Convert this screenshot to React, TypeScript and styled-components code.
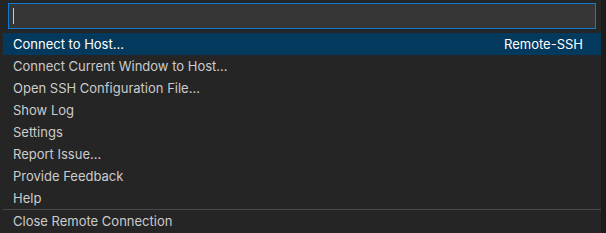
import React from "react";
import styled, { createGlobalStyle } from "styled-components";

const GlobalStyle = createGlobalStyle`
  html, body {
    margin: 0;
    padding: 0;
    background: #252526;
  }
`;

const Palette = styled("div")`
  width: 606px;
  height: 233px;
  box-sizing: border-box;
  background-color: #252526;
  font-family: Inter, "Liberation Sans", Arial, sans-serif;
  font-size: 13px;
  color: #cccccc;
  display: flex;
  flex-direction: column;
  padding: 3px 0 0 3px;
  overflow: hidden;
  border-right: 5px solid #1c1c1d;
`;

const InputWrap = styled("div")`
  padding: 0 5px;
  margin-bottom: 4px;
`;

const Input = styled("div")`
  height: 26px;
  box-sizing: border-box;
  border: 1px solid #0f7ad4;
  background-color: #363636;
  display: flex;
  align-items: center;
  padding-left: 4px;
`;

const Caret = styled("div")`
  width: 1px;
  height: 16px;
  background-color: #cccccc;
`;

const List = styled("div")`
  display: flex;
  flex-direction: column;
`;

const Row = styled("div")<{ active?: boolean; separated?: boolean }>`
  height: 22px;
  box-sizing: border-box;
  display: flex;
  align-items: center;
  justify-content: space-between;
  padding: 0 18px 0 10px;
  background-color: ${p => (p.active ? "#04395e" : "transparent")};
  color: ${p => (p.active ? "#ffffff" : "#cccccc")};
  border-top: ${p => (p.separated ? "1px solid #47474f" : "none")};
`;

const Label = styled("span")`
  white-space: nowrap;
`;

const Detail = styled("span")`
  white-space: nowrap;
`;

const items = [
  "Connect Current Window to Host...",
  "Open SSH Configuration File...",
  "Show Log",
  "Settings",
  "Report Issue...",
  "Provide Feedback",
  "Help",
];

const App: React.FC = () => {
  return (
    <React.Fragment>
      <GlobalStyle />
      <Palette>
        <InputWrap>
          <Input>
            <Caret />
          </Input>
        </InputWrap>
        <List>
          <Row active>
            <Label>Connect to Host...</Label>
            <Detail>Remote-SSH</Detail>
          </Row>
          {items.map(item => (
            <Row key={item}>
              <Label>{item}</Label>
            </Row>
          ))}
          <Row separated>
            <Label>Close Remote Connection</Label>
          </Row>
        </List>
      </Palette>
    </React.Fragment>
  );
};

export default App;
